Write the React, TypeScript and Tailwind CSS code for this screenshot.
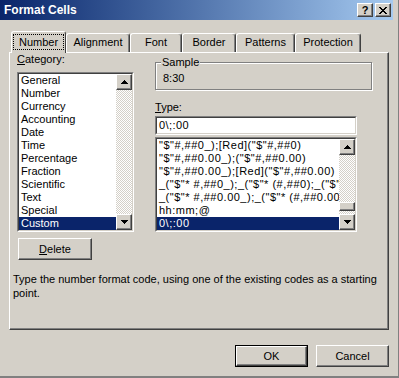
const categories = [
  'General',
  'Number',
  'Currency',
  'Accounting',
  'Date',
  'Time',
  'Percentage',
  'Fraction',
  'Scientific',
  'Text',
  'Special',
  'Custom',
];

const formats = [
  '"$"#,##0_);[Red]("$"#,##0)',
  '"$"#,##0.00_);("$"#,##0.00)',
  '"$"#,##0.00_);[Red]("$"#,##0.00)',
  '_("$"* #,##0_);_("$"* (#,##0);_("$"* "-"_);_(@_)',
  '_("$"* #,##0.00_);_("$"* (#,##0.00);_("$"* "-"??_);_(@_)',
  'hh:mm;@',
  '0\\;:00',
];

const tabs = [
  { label: 'Number', w: 'w-[55px]' },
  { label: 'Alignment', w: 'w-[64px]' },
  { label: 'Font', w: 'w-[52px]' },
  { label: 'Border', w: 'w-[54px]' },
  { label: 'Patterns', w: 'w-[59px]' },
  { label: 'Protection', w: 'w-[66px]' },
];

const raised =
  'border border-t-white border-l-white border-r-[#404040] border-b-[#404040] shadow-[inset_-1px_-1px_0_#808080] bg-[#d4d0c8]';

function Arrow({ down }: { down?: boolean }) {
  return (
    <svg width="7" height="4" viewBox="0 0 7 4" className={down ? 'rotate-180' : ''} shapeRendering="crispEdges">
      <path d="M3 0h1v1h1v1h1v1h1v1H0V3h1V2h1V1h1z" fill="#000" />
    </svg>
  );
}

function ScrollBar({ thumb }: { thumb?: boolean }) {
  return (
    <div className="w-[16px] h-full flex flex-col shrink-0">
      <div className={`${raised} w-[16px] h-[16px] flex items-center justify-center`}>
        <Arrow />
      </div>
      <div className="flex-1 flex flex-col justify-end bg-[image:repeating-conic-gradient(#ffffff_0_25%,#d4d0c8_0_50%)] bg-[length:2px_2px]">
        {thumb && <div className={`${raised} h-[9px] mb-[3px]`} />}
      </div>
      <div className={`${raised} w-[16px] h-[16px] flex items-center justify-center`}>
        <Arrow down />
      </div>
    </div>
  );
}

function Sunken({ className, children }: { className: string; children: React.ReactNode }) {
  return (
    <div className={`border border-t-[#808080] border-l-[#808080] border-r-white border-b-white ${className}`}>
      <div className="w-full h-full border border-t-[#404040] border-l-[#404040] border-r-[#d4d0c8] border-b-[#d4d0c8] bg-white flex overflow-hidden">
        {children}
      </div>
    </div>
  );
}

function ListBox({
  items,
  selected,
  className,
  rowClass = '',
  thumb,
}: {
  items: string[];
  selected: number;
  className: string;
  rowClass?: string;
  thumb?: boolean;
}) {
  return (
    <Sunken className={className}>
      <div className="flex-1 min-w-0 flex flex-col overflow-hidden">
        {items.map((item, i) => (
          <div
            key={item}
            className={`h-[13px] leading-[13px] pl-[2px] whitespace-nowrap shrink-0 ${rowClass} ${
              i === selected ? 'bg-[#0a246a] text-white' : ''
            }`}
          >
            {item}
          </div>
        ))}
      </div>
      <ScrollBar thumb={thumb} />
    </Sunken>
  );
}

export default function App() {
  return (
    <div className="w-[399px] h-[378px] bg-[#d4d0c8] flex flex-col font-['Liberation_Sans',Arial,sans-serif] text-[11px] text-black border-b-2 border-r border-[#808080] overflow-hidden select-none">
      {/* title bar */}
      <div className="h-[20px] mr-[5px] flex items-center pl-[4px] pr-[2px] bg-linear-to-r from-[#0a246a] to-[#a6caf0]">
        <span className="text-white font-bold text-[12px] flex-1">Format Cells</span>
        <div className={`${raised} w-[16px] h-[14px] flex items-center justify-center font-bold text-[11px] leading-none`}>?</div>
        <div className={`${raised} w-[16px] h-[14px] ml-[2px] flex items-center justify-center`}>
          <svg width="8" height="7" viewBox="0 0 8 7" shapeRendering="crispEdges">
            <path d="M0 0h2v1h1v1h2V1h1V0h2v1H7v1H6v1H5v1h1v1h1v1h1v1H6V6H5V5H3v1H2v1H0V6h1V5h1V4h1V3H2V2H1V1H0z" fill="#000" />
          </svg>
        </div>
      </div>

      {/* tabs */}
      <div className="flex items-end h-[21px] mt-[11px] ml-[11px]">
        {tabs.map((t, i) =>
          i === 0 ? (
            <div
              key={t.label}
              className={`${t.w} h-[22px] -mb-[1px] relative z-10 bg-[#d4d0c8] border-t border-l border-r border-t-white border-l-white border-r-[#404040] rounded-t-[3px] px-[1px] pt-[2px] pb-[3px]`}
            >
              <div className="h-full border border-dotted border-black flex items-center justify-center">{t.label}</div>
            </div>
          ) : (
            <div
              key={t.label}
              className={`${t.w} h-[19px] bg-[#d4d0c8] border-t border-l border-r border-t-white border-l-white border-r-[#404040] shadow-[inset_-1px_0_0_#808080] rounded-t-[3px] flex items-center justify-center pb-[1px]`}
            >
              {t.label}
            </div>
          ),
        )}
      </div>

      {/* panel */}
      <div className="ml-[9px] w-[380px] h-[278px] border border-t-white border-l-white border-r-[#404040] border-b-[#404040] shadow-[inset_-1px_-1px_0_#808080] flex flex-col">
        <div className="flex pl-[7px]">
          <div className="w-[117px] flex flex-col">
            <div className="h-[13px] leading-[13px]">
              <span className="underline">C</span>ategory:
            </div>
            <ListBox items={categories} selected={11} className="mt-[6px] w-[117px] h-[160px]" />
            <button className={`${raised} mt-[6px] ml-[1px] w-[74px] h-[22px] flex items-center justify-center`}>
              <span>
                <span className="underline">D</span>elete
              </span>
            </button>
          </div>

          <div className="ml-[21px] w-[217px] flex flex-col">
            <div className="relative mt-[9px] h-[28px] border border-[#808080] shadow-[1px_1px_0_#ffffff,inset_1px_1px_0_#ffffff] pl-[7px] pt-[9px] leading-[13px]">
              <span className="absolute -top-[7px] left-[5px] px-[1px] bg-[#d4d0c8] leading-[13px]">Sample</span>
              8:30
            </div>
            <div className="mt-[11px] h-[13px] leading-[13px]">
              <span className="underline">T</span>ype:
            </div>
            <Sunken className="mt-[2px] w-[202px] h-[19px]">
              <div className="pl-[2px] leading-[15px] tracking-[0.4px]">0\;:00</div>
            </Sunken>
            <ListBox
              items={formats}
              selected={6}
              rowClass="tracking-[0.5px]"
              className="mt-[2px] w-[202px] h-[95px]"
              thumb
            />
          </div>
        </div>

        <p className="mt-[12px] pl-[3px] leading-[14px] whitespace-nowrap">
          Type the number format code, using one of the existing codes as a starting
          <br />
          point.
        </p>
      </div>

      {/* buttons */}
      <div className="flex justify-end gap-[8px] mt-[15px] mr-[9px]">
        <button className="w-[73px] h-[22px] border border-black">
          <div className={`${raised} w-full h-full flex items-center justify-center`}>OK</div>
        </button>
        <button className={`${raised} w-[73px] h-[22px] flex items-center justify-center`}>Cancel</button>
      </div>
    </div>
  );
}
